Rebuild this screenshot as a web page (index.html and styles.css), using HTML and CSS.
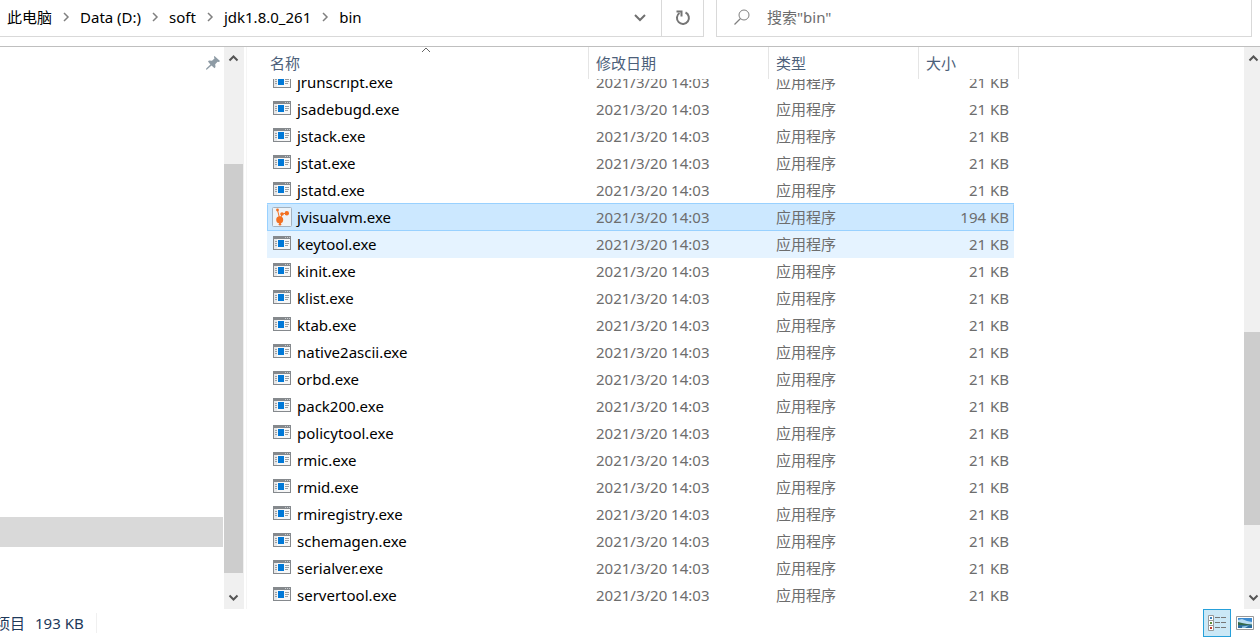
FILE: index.html
```html
<!DOCTYPE html>
<html lang="zh-CN">
  <head>
    <meta charset="UTF-8" />
    <meta name="viewport" content="width=device-width, initial-scale=1.0" />
    <title>bin</title>
    <link rel="stylesheet" href="styles.css" />
  </head>
  <body>
    <!-- 图标 -->
    <svg class="sprite" aria-hidden="true">
      <symbol id="exe" viewBox="0 0 18 14">
        <path fill="#85898d" d="M0 0h18v14H0z" />
        <path fill="#f7f7f7" d="M1 3h16v10H1z" />
        <path fill="#e6e7e8" d="M1 3h3v10H1z" />
        <path fill="#c9cccf" d="M12 1h1v1h-1zM14 1h1v1h-1zM16 1h1v1h-1z" />
        <path fill="#0078d7" d="M5 4h6v7H5z" />
        <path fill="#9b9fa3" d="M2 5h2v1H2zM2 7h2v1H2zM2 9h2v1H2zM12 5h4v1h-4zM12 7h4v1h-4zM12 9h3v1h-3z" />
      </symbol>
      <symbol id="visualvm" viewBox="0 0 20 20">
        <rect x=".5" y=".5" width="19" height="19" rx="1" fill="#edf3f8" stroke="#a3b2c0" />
        <path d="M5.500 3l2.500 10 2-6 5-1M8 13v5" fill="none" stroke="#f37021" />
        <g fill="#f37021">
          <circle cx="7.700" cy="12.700" r="3.500" />
          <circle cx="5.500" cy="3" r="1.400" />
          <circle cx="10" cy="7" r="1.800" />
          <circle cx="14.800" cy="6.300" r="2.200" />
          <circle cx="8" cy="17.300" r="1.300" />
        </g>
      </symbol>
      <symbol id="right" viewBox="0 0 8 10">
        <path d="M2 1l4 4-4 4" fill="none" stroke="#808080" stroke-width="1.5" />
      </symbol>
      <symbol id="up" viewBox="0 0 20 22">
        <path d="M5.500 13.500l4-4 4 4" fill="none" stroke="#555" stroke-width="2" />
      </symbol>
      <symbol id="down" viewBox="0 0 20 22">
        <path d="M5.500 8.500l4 4 4-4" fill="none" stroke="#555" stroke-width="2" />
      </symbol>
    </svg>

    <!-- 地址栏 -->
    <header class="toolbar">
      <div class="address">
        <nav class="crumbs">
          <a href="#">此电脑</a>
          <svg><use href="#right" /></svg>
          <a href="#">Data (D:)</a>
          <svg><use href="#right" /></svg>
          <a href="#">soft</a>
          <svg><use href="#right" /></svg>
          <a href="#">jdk1.8.0_261</a>
          <svg><use href="#right" /></svg>
          <a href="#">bin</a>
        </nav>
        <button class="history" type="button" aria-label="以前的位置">
          <svg viewBox="0 0 12 8"><path d="M1 1l5 5 5-5" fill="none" stroke="#707070" stroke-width="2" /></svg>
        </button>
        <button class="refresh" type="button" aria-label="刷新">
          <svg viewBox="0 0 16 16">
            <path d="M10.500 2.500a6 6 0 1 1-6 .5" fill="none" stroke="#757575" stroke-width="2" />
            <path d="M1.500 1.500h5v5" fill="none" stroke="#757575" stroke-width="2" />
          </svg>
        </button>
      </div>
      <label class="search">
        <svg viewBox="0 0 16 16">
          <circle cx="10" cy="6" r="5" fill="none" stroke="#808080" />
          <path d="M6.500 9.500l-6 6" stroke="#808080" stroke-width="1.200" />
        </svg>
        <input type="search" placeholder='搜索"bin"' aria-label="搜索" />
      </label>
    </header>

    <main class="content">
      <!-- 导航窗格 -->
      <aside class="sidebar">
        <svg class="pin" viewBox="0 0 14 14">
          <path fill="#8e9ba5" d="M8.500 0L14 5l-1 1-1.500-.3-2.300 2.500.3 2.800-1 1.200-3-2.700L1 13.500l-1 .2.200-1.200 4.200-4L2 5.500l1-1 3 .2 2.500-2.200-.6-1.700z" />
        </svg>
        <div class="current"></div>
      </aside>
      <div class="scrollbar scrollbar-left">
        <svg><use href="#up" /></svg>
        <div class="track"><div class="thumb"></div></div>
        <svg><use href="#down" /></svg>
      </div>

      <!-- 文件列表 -->
      <section class="files">
        <table>
          <colgroup>
            <col class="col-name" />
            <col class="col-date" />
            <col class="col-type" />
            <col class="col-size" />
            <col class="col-end" />
          </colgroup>
          <thead>
            <tr>
              <th>
                名称
                <svg class="sort" viewBox="0 0 10 6"><path d="M1 5l4-4 4 4" fill="none" stroke="#666" /></svg>
              </th>
              <th>修改日期</th>
              <th>类型</th>
              <th colspan="2">大小</th>
            </tr>
          </thead>
          <tbody></tbody>
        </table>
      </section>
      <div class="scrollbar scrollbar-right">
        <svg><use href="#up" /></svg>
        <div class="track"><div class="thumb"></div></div>
        <svg><use href="#down" /></svg>
      </div>
    </main>

    <!-- 状态栏 -->
    <footer class="status">
      <span class="count">项目</span>
      <span class="total">193 KB</span>
      <div class="views">
        <button class="view active" type="button" aria-label="详细信息">
          <svg viewBox="0 0 18 16">
            <path fill="#fff" stroke="#999" d="M.5.5h5v5h-5zM.5 5.500h5v5h-5zM.5 10.500h5v5h-5z" />
            <path fill="#3b83bd" d="M2 2h2v2H2z" />
            <path fill="#5b8c3a" d="M2 7h2v2H2z" />
            <path fill="#c0392b" d="M2 12h2v2H2z" />
            <path fill="#777" d="M7 2h5v1H7zM13 2h5v1h-5zM7 7h5v1H7zM13 7h5v1h-5zM7 12h5v1H7zM13 12h5v1h-5z" />
          </svg>
        </button>
        <button class="view" type="button" aria-label="大图标">
          <svg viewBox="0 0 18 14">
            <path fill="#fff" stroke="#999" d="M.5.5h17v13H.5z" />
            <path fill="#3c8ad0" d="M2 2h14v10H2z" />
            <path fill="#b9dcf2" d="M2 4l4-1 5 2 5 1v3H2z" />
            <path fill="#35684a" d="M2 6l4 1 5 1 5 .5V9.500H2z" />
            <path fill="#2a6a9e" d="M2 9.500h14V12H2z" />
            <path fill="#8fc3e2" d="M6 10.500l7-1-4 2.500H6z" />
          </svg>
        </button>
      </div>
    </footer>

    <script>
      const names = [
        "jrunscript", "jsadebugd", "jstack", "jstat", "jstatd",
        "jvisualvm", "keytool", "kinit", "klist", "ktab",
        "native2ascii", "orbd", "pack200", "policytool", "rmic",
        "rmid", "rmiregistry", "schemagen", "serialver", "servertool",
      ];
      const filesEl = document.querySelector(".files");
      const bodyEl = document.querySelector("tbody");

      // 渲染文件行
      bodyEl.innerHTML = names
        .map((name) => {
          const isVm = name === "jvisualvm";
          const state = isVm ? "selected" : name === "keytool" ? "hover" : "";
          return `<tr class="${state}">
            <td><div class="name"><svg class="${isVm ? "icon-vm" : "icon-exe"}"><use href="#${isVm ? "visualvm" : "exe"}" /></svg>${name}.exe</div></td>
            <td>2021/3/20 14:03</td>
            <td>应用程序</td>
            <td>${isVm ? 194 : 21} KB</td>
            <td></td>
          </tr>`;
        })
        .join("");

      // 滚动到列表底部
      filesEl.scrollTop = filesEl.scrollHeight;
    </script>
  </body>
</html>
```
FILE: styles.css
```css
* {
  box-sizing: border-box;
  margin: 0;
  padding: 0;
}

body {
  display: flex;
  flex-direction: column;
  height: 100vh;
  overflow: hidden;

  font: 15px/20px "Noto Sans", "Noto Sans CJK SC", sans-serif;
  color: #000;
  background-color: #fff;
}

button {
  border: 0;
  background: none;
}

svg {
  display: block;
  flex: none;
}

.sprite {
  position: absolute;
  width: 0;
  height: 0;
}

/* 地址栏 */
.toolbar {
  display: grid;
  grid-template-columns: 704fr 536fr;
  gap: 12px;
  height: 47px;
  padding: 0 8px 9px 0;
  border-bottom: 1px solid #bfbfbf;
}

.address {
  display: flex;
  border: solid #d9d9d9;
  border-width: 0 1px 1px 0;
}

.crumbs {
  display: flex;
  flex: 1;
  align-items: center;
  gap: 10px;
  padding: 0 0 2px 7px;
  white-space: nowrap;
}

.crumbs a {
  color: #000;
  text-decoration: none;
}

.crumbs svg {
  width: 8px;
  height: 10px;
}

.history,
.refresh {
  display: flex;
  align-items: center;
  justify-content: center;
  width: 42px;
}

.refresh {
  border-left: 1px solid #d9d9d9;
}

.history svg {
  width: 12px;
  height: 8px;
}

.refresh svg {
  width: 16px;
  height: 16px;
}

.search {
  display: flex;
  align-items: center;
  gap: 17px;
  padding: 0 0 2px 17px;
  border: solid #d9d9d9;
  border-width: 0 1px 1px;
}

.search svg {
  width: 16px;
  height: 16px;
}

.search input {
  flex: 1;
  border: 0;
  outline: 0;
  font: inherit;
  background: none;
}

.search input::placeholder {
  color: #6d6d6d;
}

/* 主体 */
.content {
  display: flex;
  flex: 1;
  min-height: 0;
}

.sidebar {
  display: flex;
  flex-direction: column;
  justify-content: space-between;
  width: 224px;
  padding: 9px 1px 62px 0;
}

.pin {
  align-self: flex-end;
  width: 14px;
  height: 14px;
  margin-right: 3px;
}

.current {
  height: 30px;
  background-color: #d9d9d9;
}

.scrollbar {
  display: flex;
  flex-direction: column;
  width: 20px;
  background-color: #f0f0f0;
}

.scrollbar svg {
  width: 20px;
  height: 22px;
}

.scrollbar-right {
  width: 16px;
  overflow: hidden;
}

.track {
  flex: 1;
  display: grid;
}

.scrollbar-left .track {
  grid-template-rows: 95fr 409fr 14fr;
  padding-right: 1px;
}

.scrollbar-right .track {
  grid-template-rows: 263fr 193fr 62fr;
}

.thumb {
  grid-row: 2;
  background-color: #cdcdcd;
}

/* 文件列表 */
.files {
  flex: 1;
  margin-left: 2px;
  padding-left: 20px;
  overflow: hidden;
  border-left: 1px solid #f5f5f5;
}

table {
  width: 752px;
  table-layout: fixed;
  border-spacing: 0;
}

.col-name {
  width: 322px;
}

.col-date {
  width: 180px;
}

.col-type {
  width: 150px;
}

.col-size {
  width: 95px;
}

.col-end {
  width: 5px;
}

th {
  position: sticky;
  z-index: 1;
  top: 0;
  height: 32px;
  padding-left: 7px;
  border-right: 1px solid #e5e5e5;

  font-weight: normal;
  text-align: left;
  color: #4c607a;
  background-color: #fff;
}

th:first-child {
  padding-left: 3px;
}

.sort {
  position: absolute;
  top: 0;
  left: calc(50% - 7px);
  width: 10px;
  height: 6px;
}

td {
  height: 27px;
  padding: 0 0 2px 7px;
  border: solid transparent;
  border-width: 1px 0;
  color: #6d6d6d;
  white-space: nowrap;
}

td:first-child {
  padding-left: 4px;
  border-left-width: 1px;
  color: #000;
}

td:nth-child(4) {
  padding-right: 4px;
  border-right-width: 1px;
  text-align: right;
}

td:last-child {
  padding: 0;
}

.name {
  display: flex;
  align-items: center;
  height: 20px;
}

.icon-exe {
  width: 18px;
  height: 14px;
  margin: 0 6px 2px 1px;
}

.icon-vm {
  width: 20px;
  height: 20px;
  margin-right: 5px;
}

.selected td:not(:last-child) {
  border-color: #cce8ff #99d1ff #99d1ff;
  background-color: #cce8ff;
  box-shadow: 0 -1px #99d1ff;
}

.hover td:not(:last-child) {
  background-color: #e5f3ff;
}

/* 状态栏 */
.status {
  display: flex;
  align-items: center;
  height: 28px;
  padding-right: 1px;
  color: #1e395b;
}

.count {
  margin-left: -5px;
}

.total {
  margin-left: 10px;
  padding-right: 12px;
  border-right: 1px solid #f0f0f0;
}

.views {
  display: flex;
  margin-left: auto;
}

.view {
  display: flex;
  align-items: center;
  justify-content: center;
  width: 28px;
  height: 28px;
}

.view svg {
  width: 18px;
  height: 14px;
}

.view.active {
  border: 1px solid #26a0da;
  background-color: #cbe8f6;
}

.view.active svg {
  height: 16px;
}
```
